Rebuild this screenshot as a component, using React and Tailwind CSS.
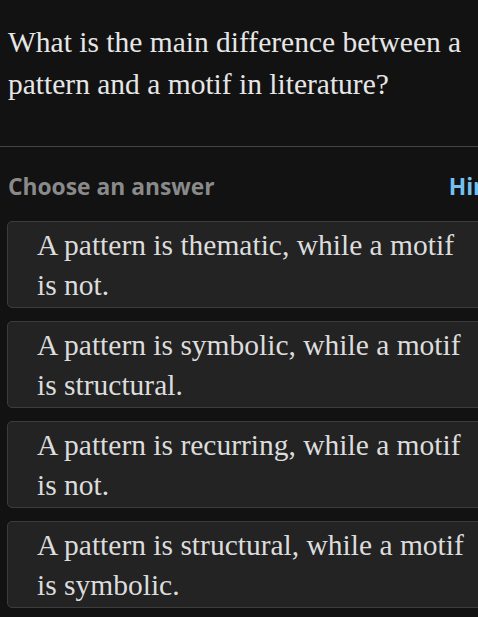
const options = [
  ['A pattern is thematic, while a motif', 'is not.'],
  ['A pattern is symbolic, while a motif', 'is structural.'],
  ['A pattern is recurring, while a motif', 'is not.'],
  ['A pattern is structural, while a motif', 'is symbolic.'],
];

export default function App() {
  return (
    <div className="min-h-[617px] w-[478px] overflow-hidden bg-[#121212]">
      {/* Question */}
      <div className="px-2 pt-[21px] pb-[41px] font-['Liberation_Serif',serif] text-[29.5px] leading-[42px] text-[#e6e6e6]">
        What is the main difference between a pattern and a motif in literature?
      </div>

      <div className="h-px w-full bg-[#444]" />

      {/* Header */}
      <div className="flex w-[520px] items-center justify-between pl-2 pr-[22px] pt-[25px] pb-[19px] font-['Open_Sans',sans-serif] text-[22.8px] font-bold leading-[30px]">
        <span className="text-[#8a8a8a]">Choose an answer</span>
        <span className="whitespace-nowrap text-[#74c0ef]">Hint</span>
      </div>

      {/* Options */}
      <div className="flex w-[520px] flex-col gap-[13px] pl-[7px]">
        {options.map((lines) => (
          <div
            key={lines[0]}
            className="rounded-[5px] border border-[#3c3c3c] bg-[#232323] px-[29px] py-[2.5px] font-['Liberation_Serif',serif] text-[29.5px] leading-[40px] text-[#dcdcdc]"
          >
            <span className="block whitespace-nowrap">{lines[0]}</span>
            <span className="block whitespace-nowrap">{lines[1]}</span>
          </div>
        ))}
      </div>
    </div>
  );
}
